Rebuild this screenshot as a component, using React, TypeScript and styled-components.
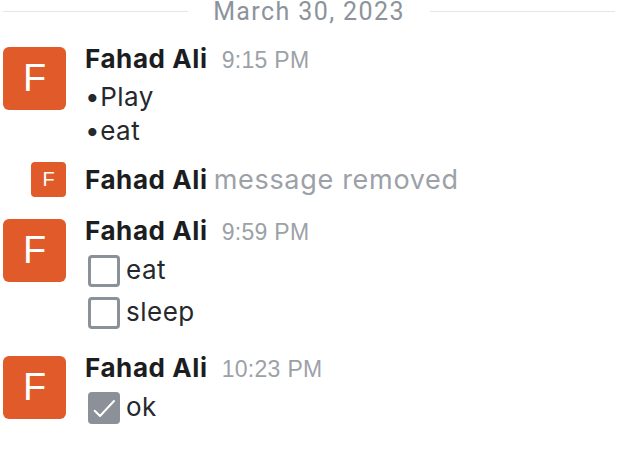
import React from 'react';
import styled, { createGlobalStyle } from 'styled-components';

const GlobalStyle = createGlobalStyle`
  body {
    margin: 0;
    background: #ffffff;
    font-family: Inter, "Noto Sans", sans-serif;
  }
`;

interface TaskItem {
  label: string;
  done: boolean;
}

interface Message {
  id: number;
  time?: string;
  bullets?: string[];
  tasks?: TaskItem[];
  removed?: boolean;
}

const messages: Message[] = [
  { id: 1, time: '9:15 PM', bullets: ['Play', 'eat'] },
  { id: 2, removed: true },
  {
    id: 3,
    time: '9:59 PM',
    tasks: [
      { label: 'eat', done: false },
      { label: 'sleep', done: false },
    ],
  },
  { id: 4, time: '10:23 PM', tasks: [{ label: 'ok', done: true }] },
];

const Page = styled.div`
  width: 620px;
  height: 466px;
  padding: 0 5px 0 3px;
  box-sizing: border-box;
  overflow: hidden;
`;

/* date separator with a line on each side */
const DateRow = styled.div`
  display: flex;
  align-items: center;
  gap: 25px;
  height: 24px;
`;

const DateLine = styled.div`
  flex: 1;
  height: 1px;
  margin-top: -2px;
  background: #e2e5e9;
`;

const DateText = styled.span`
  font-family: Roboto, "Liberation Sans", sans-serif;
  font-size: 25px;
  line-height: 22px;
  letter-spacing: 1.4px;
  color: #8d939b;
`;

const Row = styled.div<{ $top: number; $compact?: boolean }>`
  display: flex;
  align-items: ${(p) => (p.$compact ? 'center' : 'flex-start')};
  gap: 19px;
  margin-top: ${(p) => p.$top}px;
`;

const AvatarSlot = styled.div`
  width: 63px;
  display: flex;
  justify-content: flex-end;
  flex-shrink: 0;
`;

const Avatar = styled.div<{ $small?: boolean }>`
  width: ${(p) => (p.$small ? 35 : 63)}px;
  height: ${(p) => (p.$small ? 35 : 63)}px;
  margin-top: ${(p) => (p.$small ? 0 : 3)}px;
  border-radius: ${(p) => (p.$small ? 4 : 6)}px;
  background: #e05a2a;
  color: #ffffff;
  display: flex;
  align-items: center;
  justify-content: center;
  font-family: "Liberation Sans", Arial, sans-serif;
  font-size: ${(p) => (p.$small ? 20 : 38)}px;
`;

const Body = styled.div`
  display: flex;
  flex-direction: column;
`;

const Header = styled.div`
  display: flex;
  align-items: baseline;
  height: 30px;
  line-height: 30px;
`;

const Name = styled.span`
  font-size: 26px;
  font-weight: 700;
  letter-spacing: 0.6px;
  color: #1b1d21;
`;

const Time = styled.span`
  margin-left: 14px;
  font-family: "Liberation Sans", Arial, sans-serif;
  font-size: 23px;
  letter-spacing: 0.3px;
  color: #9ca1a8;
`;

const Removed = styled.span`
  margin-left: 6px;
  font-size: 27px;
  letter-spacing: 0.7px;
  color: #9ca1a8;
`;

const Bullets = styled.div`
  margin-top: 6px;
`;

const Bullet = styled.div`
  font-size: 26px;
  line-height: 34px;
  letter-spacing: 0.5px;
  color: #25282d;
`;

const Tasks = styled.div`
  margin-top: 4px;
`;

const Task = styled.div`
  display: flex;
  align-items: center;
  gap: 6px;
  height: 42px;
  padding-left: 3px;
`;

const Box = styled.div<{ $done: boolean }>`
  width: 32px;
  height: 32px;
  box-sizing: border-box;
  border-radius: 4px;
  border: ${(p) => (p.$done ? 'none' : '3px solid #8b9199')};
  background: ${(p) => (p.$done ? '#8b9099' : '#ffffff')};
`;

const TaskLabel = styled.span`
  font-size: 26px;
  line-height: 31px;
  letter-spacing: 0.5px;
  margin-top: -3px;
  color: #25282d;
`;

const tops = [20, 14, 19, 19];

const App: React.FC = () => {
  return (
    <Page>
      <GlobalStyle />
      <DateRow>
        <DateLine />
        <DateText>March 30, 2023</DateText>
        <DateLine />
      </DateRow>
      {messages.map((m, i) => (
        <Row key={m.id} $top={tops[i]} $compact={m.removed}>
          <AvatarSlot>
            <Avatar $small={m.removed}>F</Avatar>
          </AvatarSlot>
          <Body>
            <Header>
              <Name>Fahad Ali</Name>
              {m.removed ? <Removed>message removed</Removed> : <Time>{m.time}</Time>}
            </Header>
            {m.bullets && (
              <Bullets>
                {m.bullets.map((b) => (
                  <Bullet key={b}>•{b}</Bullet>
                ))}
              </Bullets>
            )}
            {m.tasks && (
              <Tasks>
                {m.tasks.map((t) => (
                  <Task key={t.label}>
                    <Box $done={t.done}>
                      {t.done && (
                        <svg width="32" height="32" viewBox="0 0 32 32">
                          <path d="M6.7 18.7 L12 24 L26 9" fill="none" stroke="#ffffff" strokeWidth="2" strokeLinecap="round" strokeLinejoin="round" />
                        </svg>
                      )}
                    </Box>
                    <TaskLabel>{t.label}</TaskLabel>
                  </Task>
                ))}
              </Tasks>
            )}
          </Body>
        </Row>
      ))}
    </Page>
  );
};

export default App;
